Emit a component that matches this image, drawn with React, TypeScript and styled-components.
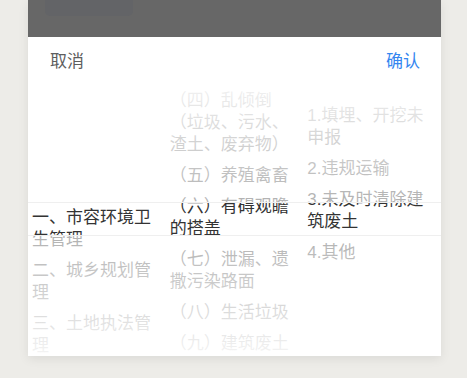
import React from "react";
import styled, { createGlobalStyle } from "styled-components";

const Global = createGlobalStyle`
  html, body {
    margin: 0;
    padding: 0;
    background: #edece8;
  }
  body {
    font-family: "Liberation Sans", "Noto Sans CJK SC", sans-serif;
  }
`;

const Stage = styled.div`
  width: 467px;
  height: 378px;
  padding-left: 28px;
  box-sizing: border-box;
  overflow: hidden;
`;

const Device = styled.div`
  width: 413px;
  height: 356px;
  display: flex;
  flex-direction: column;
  background: #fff;
  box-shadow: 0 3px 10px rgba(0, 0, 0, 0.08);
`;

const Dimmed = styled.div`
  flex: none;
  height: 37px;
  background: #676767;
  padding-left: 17px;
`;

const GhostButton = styled.div`
  width: 88px;
  height: 16px;
  background: #636467;
  border-radius: 0 0 5px 5px;
`;

const Toolbar = styled.div`
  flex: none;
  height: 45px;
  display: flex;
  align-items: center;
  justify-content: space-between;
  padding: 0 21px 0 22px;
`;

const Action = styled.span<{ $primary?: boolean }>`
  font-family: "Noto Sans CJK SC", sans-serif;
  font-size: 17px;
  line-height: 22px;
  color: ${(p) => (p.$primary ? "#3486f0" : "#5e5e5e")};
`;

const Body = styled.div`
  position: relative;
  height: 274px;
  display: flex;
  overflow: hidden;
`;

const Column = styled.div`
  flex: 1;
  min-width: 0;
`;

const Track = styled.div<{ $offset: number }>`
  transform: translateY(${(p) => p.$offset}px);
`;

const Item = styled.div`
  padding: 4.5px 4px;
  font-size: 17px;
  line-height: 22px;
  color: #333;
`;

const Mask = styled.div`
  position: absolute;
  inset: 0;
  pointer-events: none;
  background-image: linear-gradient(
      180deg,
      rgba(255, 255, 255, 0.95),
      rgba(255, 255, 255, 0.62)
    ),
    linear-gradient(0deg, rgba(255, 255, 255, 0.95), rgba(255, 255, 255, 0.62));
  background-position: top, bottom;
  background-size: 100% 120px;
  background-repeat: no-repeat;
`;

const Indicator = styled.div`
  position: absolute;
  left: 0;
  right: 0;
  top: 120px;
  height: 34px;
  box-sizing: border-box;
  border-top: 1px solid #efefef;
  border-bottom: 1px solid #efefef;
  pointer-events: none;
`;

const columns: { offset: number; items: string[] }[] = [
  {
    offset: 120,
    items: ["一、市容环境卫生管理", "二、城乡规划管理", "三、土地执法管理"],
  },
  {
    offset: 2.5,
    items: [
      "（四）乱倾倒（垃圾、污水、渣土、废弃物）",
      "（五）养殖禽畜",
      "（六）有碍观瞻的搭盖",
      "（七）泄漏、遗撒污染路面",
      "（八）生活垃圾",
      "（九）建筑废土管理",
    ],
  },
  {
    offset: 17.5,
    items: ["1.填埋、开挖未申报", "2.违规运输", "3.未及时清除建筑废土", "4.其他"],
  },
];

export default function App() {
  return (
    <>
      <Global />
      <Stage>
        <Device>
          <Dimmed>
            <GhostButton />
          </Dimmed>
          <Toolbar>
            <Action>取消</Action>
            <Action $primary>确认</Action>
          </Toolbar>
          <Body>
            {columns.map((col, i) => (
              <Column key={i}>
                <Track $offset={col.offset}>
                  {col.items.map((t) => (
                    <Item key={t}>{t}</Item>
                  ))}
                </Track>
              </Column>
            ))}
            <Mask />
            <Indicator />
          </Body>
        </Device>
      </Stage>
    </>
  );
}
